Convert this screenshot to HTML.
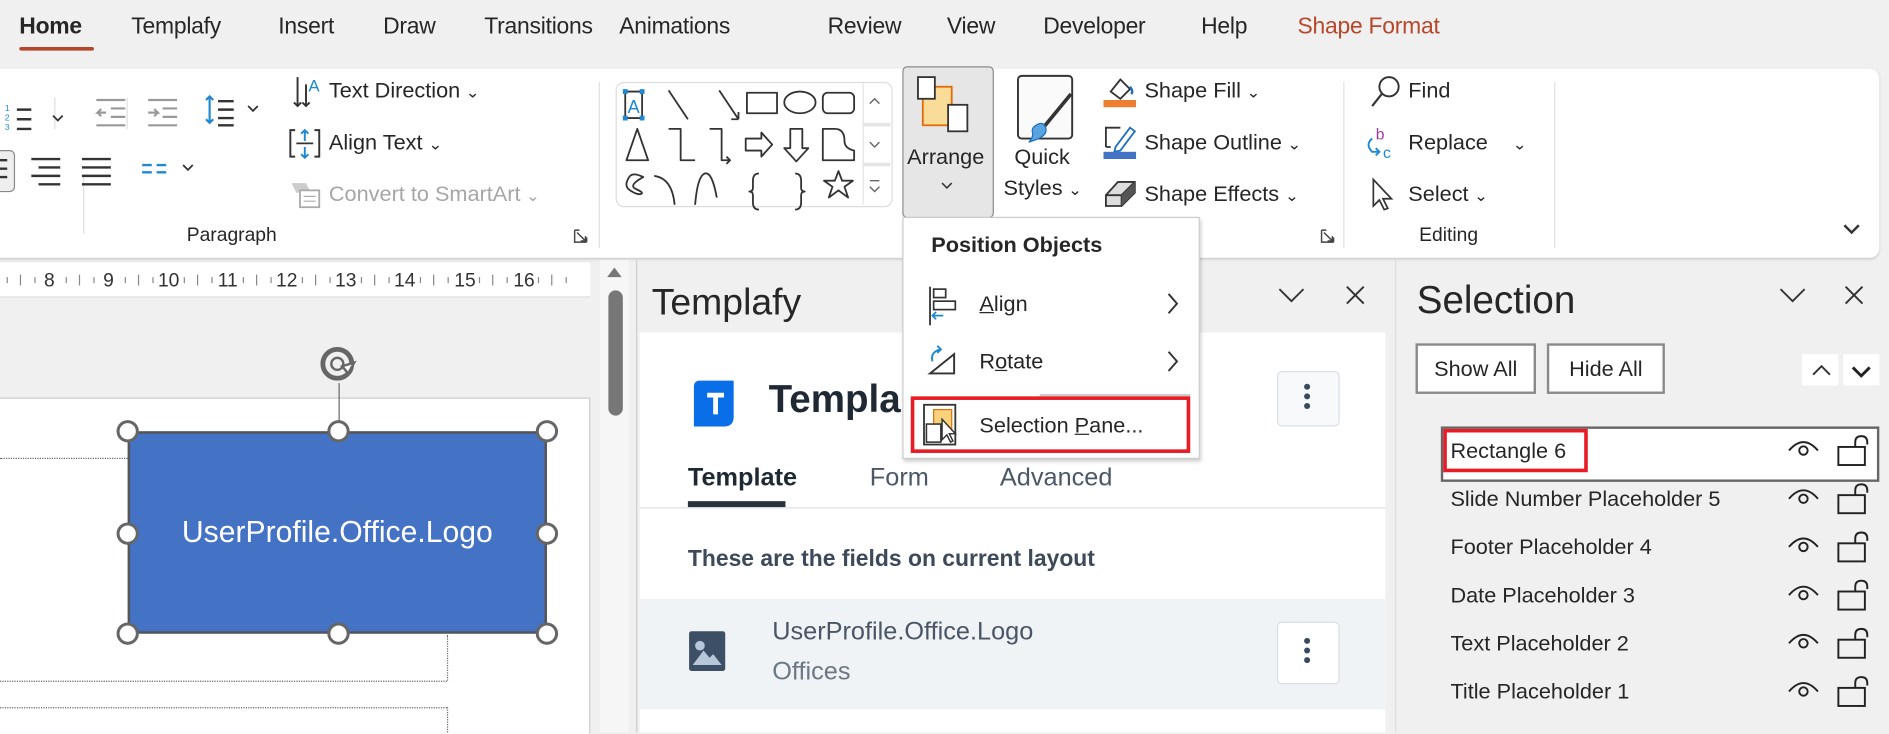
<!DOCTYPE html>
<html><head><meta charset="utf-8">
<style>
html,body{margin:0;padding:0;width:1889px;height:733px;overflow:hidden;background:#f0f0f0}
#w{position:absolute;left:0;top:0;width:1568px;height:608px;transform:scale(1.2047);transform-origin:0 0;font-family:"Liberation Sans",sans-serif;color:#262626}
.a{position:absolute;white-space:nowrap}
.t{font-size:19px;top:12px;letter-spacing:-0.2px}
.r{font-size:18px}
.c{font-size:13px;display:inline-block;transform:scaleX(1.1)}
svg{position:absolute;overflow:visible}
.sel{font-size:18px;left:1204px}
</style></head><body><div id="w">
<!-- tabs -->
<div class="a t" style="left:16px;font-weight:bold">Home</div>
<div class="a" style="left:16px;top:39px;width:62px;height:3px;background:#b7472a;border-radius:2px"></div>
<div class="a t" style="left:109px">Templafy</div>
<div class="a t" style="left:231px">Insert</div>
<div class="a t" style="left:318px">Draw</div>
<div class="a t" style="left:402px">Transitions</div>
<div class="a t" style="left:514px">Animations</div>
<div class="a t" style="left:687px">Review</div>
<div class="a t" style="left:786px">View</div>
<div class="a t" style="left:866px">Developer</div>
<div class="a t" style="left:997px">Help</div>
<div class="a t" style="left:1077px;color:#b7472a">Shape Format</div>
<!-- ribbon -->
<div class="a" style="left:-10px;top:57px;width:1570px;height:157px;background:#fff;border-radius:8px;box-shadow:0 1px 2px #ccc"></div>
<div class="a" style="left:497px;top:68px;width:1px;height:138px;background:#e0e0e0"></div>
<div class="a" style="left:1115px;top:68px;width:1px;height:138px;background:#e0e0e0"></div>
<div class="a" style="left:1290px;top:68px;width:1px;height:138px;background:#e0e0e0"></div>
<div class="a" style="left:45px;top:81px;width:1px;height:26px;background:#ddd"></div>
<div class="a" style="left:105px;top:81px;width:1px;height:26px;background:#ddd"></div>
<div class="a" style="left:69px;top:146px;width:1px;height:48px;background:#ddd"></div>
<!-- paragraph icons -->
<svg style="left:4px;top:80px" width="40" height="40"><g stroke="#333" stroke-width="2"><path d="M10 11h12M10 19h12M10 27h12"/></g><text x="0" y="12" font-size="7" fill="#1e88d2">1</text><text x="0" y="20" font-size="7" fill="#1e88d2">2</text><text x="0" y="28" font-size="7" fill="#1e88d2">3</text><path d="M40 16l4 4 4-4" stroke="#333" fill="none" stroke-width="1.5"/></svg>
<svg style="left:80px;top:80px" width="30" height="30"><g stroke="#999" stroke-width="1.8"><path d="M0 3h24M12 10h12M12 17h12M0 24h24M8 13.5H1l3-3M1 13.5l3 3" fill="none"/></g></svg>
<svg style="left:123px;top:80px" width="30" height="30"><g stroke="#999" stroke-width="1.8"><path d="M0 3h24M12 10h12M12 17h12M0 24h24M0 13.5h8l-3-3M8 13.5l-3 3" fill="none"/></g></svg>
<svg style="left:170px;top:78px" width="50" height="30"><path d="M4 2v22M1 5l3-3 3 3M1 21l3 3 3-3" stroke="#1e88d2" stroke-width="1.8" fill="none"/><path d="M11 6h13M11 13h13M11 20h13M11 26h13" stroke="#333" stroke-width="2"/><path d="M36 10l4 4 4-4" stroke="#333" fill="none" stroke-width="1.5"/></svg>
<svg style="left:-4px;top:124px" width="20" height="36"><rect x="0" y="1" width="16" height="34" rx="4" fill="#eee" stroke="#888"/><path d="M2 9h8M2 16h8M2 23h8" stroke="#333" stroke-width="2"/></svg>
<svg style="left:26px;top:130px" width="30" height="30"><path d="M0 2h24M6 9h18M0 16h24M6 23h18" stroke="#333" stroke-width="2"/></svg>
<svg style="left:68px;top:130px" width="30" height="30"><path d="M0 2h24M0 9h24M0 16h24M0 23h24" stroke="#333" stroke-width="2"/></svg>
<svg style="left:118px;top:133px" width="50" height="20"><path d="M0 4h8M12 4h8M0 10h8M12 10h8" stroke="#1e88d2" stroke-width="2"/><path d="M34 4l4 4 4-4" stroke="#333" fill="none" stroke-width="1.5"/></svg>
<svg style="left:243px;top:62px" width="26" height="30"><path d="M4 2v24M1 23l3 3 3-3M11 8v18M8 23l3 3 3-3" stroke="#333" stroke-width="1.6" fill="none"/><text x="13" y="14" font-size="14" fill="#1e88d2" font-family="Liberation Sans">A</text></svg>
<div class="a r" style="left:273px;top:65px">Text Direction <span class="c">⌄</span></div>
<svg style="left:240px;top:106px" width="30" height="30"><path d="M5 2H1v22h4M21 2h4v22h-4" stroke="#333" stroke-width="1.6" fill="none"/><path d="M6 13h14" stroke="#333" stroke-width="1.5"/><path d="M13 2v9M10 5l3-3 3 3M13 16v9M10 22l3 3 3-3" stroke="#1e88d2" stroke-width="1.6" fill="none"/></svg>
<div class="a r" style="left:273px;top:108px">Align Text <span class="c">⌄</span></div>
<svg style="left:240px;top:150px" width="30" height="26"><path d="M2 2h12l4 8H6z" fill="#ccc"/><rect x="9" y="8" width="16" height="14" fill="#fff" stroke="#aaa" stroke-width="1.5"/><path d="M12 13h10M12 17h10" stroke="#aaa"/></svg>
<div class="a r" style="left:273px;top:151px;color:#a6a6a6">Convert to SmartArt <span class="c">⌄</span></div>
<div class="a" style="left:155px;top:187px;font-size:16px">Paragraph</div>
<svg style="left:476px;top:190px" width="12" height="12"><path d="M1 1v10h10M1 1h4M11 7v4M3 3l7 7M10 6v4H6" stroke="#444" fill="none" stroke-width="1.2"/></svg>
<!-- shapes gallery -->
<div class="a" style="left:511px;top:68px;width:228px;height:102px;border:1px solid #ddd;border-radius:7px;background:#fff"></div>
<div class="a" style="left:716px;top:69px;width:1px;height:101px;background:#e4e4e4"></div>
<div class="a" style="left:716px;top:102px;width:23px;height:3px;background:#e4e4e4"></div>
<div class="a" style="left:716px;top:135px;width:23px;height:3px;background:#e4e4e4"></div>
<svg style="left:515px;top:70px" width="230" height="100" fill="none" stroke="#333" stroke-width="1.5" stroke-linejoin="round">
<rect x="4" y="6" width="14" height="22" stroke="#333"/><g fill="#1e88d2" stroke="none"><rect x="2" y="4" width="4" height="4"/><rect x="16" y="4" width="4" height="4"/><rect x="2" y="26" width="4" height="4"/><rect x="16" y="26" width="4" height="4"/></g><text x="6" y="24" font-size="15" fill="#1e88d2" stroke="none" font-family="Liberation Sans">A</text>
<path d="M40 5l16 24M82 5l16 24m0 0v-6m0 6h-6"/>
<rect x="105" y="7" width="25" height="17"/><ellipse cx="149" cy="15" rx="13" ry="9"/><rect x="168" y="7" width="26" height="17" rx="4"/>
<path d="M5 63l9-26 9 26zM40 37h10v26h12M74 37h10v26h7m-3-3l3 3-3 3M104 45h13v-5l9 10-9 10v-5h-13zM141 37h10v16h5l-10 11-10-11h5zM168 63V37h10q8 0 8 10 0 6 8 8v8z"/>
<path d="M8 76q-6 8 0 12t9 3-4-4 6-10q-8-4-11-1M28 76q15 2 17 24M62 100q2-24 8-26t10 20M115 74q-5 0-5 6v6q0 3-3 3 3 0 3 3v6q0 6 5 6M145 74q5 0 5 6v6q0 3 3 3-3 0-3 3v6q0 6-5 6M181 72l3 8h9l-7 5 3 9-8-6-8 6 3-9-7-5h9z"/>
<path d="M207 16l4-4 4 4M207 48l4 4 4-4M207 80h8M207 85l4 4 4-4" stroke-width="1.2" stroke="#666"/>
</svg>
<!-- arrange -->
<div class="a" style="left:749px;top:55px;width:74px;height:124px;background:#e6e6e6;border:1px solid #8a8a8a;border-radius:4px"></div>
<svg style="left:762px;top:64px" width="46" height="50"><rect x="4" y="8" width="24" height="32" fill="#f9dc98" stroke="#e36c0a" stroke-width="1.5"/><rect x="0" y="0" width="14" height="18" fill="#fff" stroke="#333" stroke-width="1.5"/><rect x="25" y="23" width="16" height="22" fill="#fff" stroke="#333" stroke-width="1.5"/></svg>
<div class="a r" style="left:753px;top:120px">Arrange</div>
<svg style="left:781px;top:151px" width="10" height="8"><path d="M1 1l4 4 4-4" stroke="#333" stroke-width="1.3" fill="none"/></svg>
<svg style="left:844px;top:62px" width="50" height="60"><rect x="1" y="1" width="45" height="52" rx="3" fill="#fafafa" stroke="#333" stroke-width="1.6"/><path d="M45 16L22 44" stroke="#333" stroke-width="3"/><path d="M16 42q6-4 8 2t-8 10l-6 2q4-4 3-8t3-6z" fill="#5ba3de" stroke="#1e6fbf"/></svg>
<div class="a r" style="left:842px;top:120px">Quick</div>
<div class="a r" style="left:833px;top:146px">Styles <span class="c">⌄</span></div>
<svg style="left:916px;top:62px" width="30" height="30"><path d="M6 14l8-10 8 8-8 8z" fill="#fff" stroke="#333" stroke-width="1.5"/><path d="M22 10q3 4 1 6" stroke="#1e6fbf" stroke-width="2" fill="none"/><rect x="0" y="21" width="27" height="6" fill="#ed7d31"/></svg>
<div class="a r" style="left:950px;top:65px">Shape Fill <span class="c">⌄</span></div>
<svg style="left:916px;top:104px" width="30" height="30"><path d="M2 18V2h12M2 18h4" stroke="#333" stroke-width="1.5" fill="none"/><path d="M10 18l12-16 4 3-12 16-5 1z" fill="#fff" stroke="#1e6fbf" stroke-width="1.5"/><rect x="0" y="22" width="27" height="6" fill="#4472c4"/></svg>
<div class="a r" style="left:950px;top:108px">Shape Outline <span class="c">⌄</span></div>
<svg style="left:916px;top:148px" width="30" height="26"><path d="M2 14l10-11h14v9L15 23H2z" fill="#ddd" stroke="#333" stroke-width="1.5"/><path d="M2 14h13v9M15 14L26 3" stroke="#333" stroke-width="1.5" fill="none"/><path d="M15 14v9L26 12V3z" fill="#555"/></svg>
<div class="a r" style="left:950px;top:151px">Shape Effects <span class="c">⌄</span></div>
<svg style="left:1096px;top:190px" width="12" height="12"><path d="M1 1v10h10M1 1h4M11 7v4M3 3l7 7M10 6v4H6" stroke="#444" fill="none" stroke-width="1.2"/></svg>
<!-- editing -->
<svg style="left:1137px;top:62px" width="30" height="30"><circle cx="16" cy="10" r="8" fill="none" stroke="#333" stroke-width="1.6"/><path d="M10 16L2 26" stroke="#333" stroke-width="1.8"/></svg>
<div class="a r" style="left:1169px;top:65px">Find</div>
<svg style="left:1132px;top:103px" width="30" height="34"><text x="10" y="13" font-size="13" fill="#a43ba4" font-family="Liberation Sans">b</text><text x="16" y="28" font-size="13" fill="#1e88d2" font-family="Liberation Sans">c</text><path d="M7 12q-6 5 0 11h6m-3-3l3 3-3 3" stroke="#1e88d2" stroke-width="1.6" fill="none"/></svg>
<div class="a r" style="left:1169px;top:108px">Replace</div>
<div class="a r" style="left:1256px;top:108px"><span class="c">⌄</span></div>
<svg style="left:1138px;top:147px" width="20" height="30"><path d="M2 2v22l5-5 4 8 3-1-4-8h7z" fill="#fff" stroke="#333" stroke-width="1.4"/></svg>
<div class="a r" style="left:1169px;top:151px">Select <span class="c">⌄</span></div>
<div class="a" style="left:1178px;top:187px;font-size:16px">Editing</div>
<svg style="left:1530px;top:185px" width="14" height="10"><path d="M1 2l6 6 6-6" stroke="#333" stroke-width="2" fill="none"/></svg>
<!-- ruler -->
<div class="a" style="left:0;top:218px;width:490px;height:28px;background:#fff;border-bottom:1px solid #ddd"></div>
<svg style="left:0;top:218px" width="490" height="28"><g stroke="#888"><path d="M6 12v5M17 10v9M29 12v5M55 12v5M66 10v9M78 12v5M104 12v5M115 10v9M127 12v5M153 12v5M164 10v9M176 12v5M202 12v5M213 10v9M225 12v5M251 12v5M262 10v9M274 12v5M300 12v5M311 10v9M323 12v5M349 12v5M360 10v9M372 12v5M398 12v5M409 10v9M421 12v5M447 12v5M458 10v9M470 12v5"/></g>
<g font-size="16" fill="#333" font-family="Liberation Sans" text-anchor="middle"><text x="41" y="20">8</text><text x="90" y="20">9</text><text x="140" y="20">10</text><text x="189" y="20">11</text><text x="238" y="20">12</text><text x="287" y="20">13</text><text x="336" y="20">14</text><text x="386" y="20">15</text><text x="435" y="20">16</text></g></svg>
<!-- slide -->
<div class="a" style="left:0;top:330px;width:489px;height:278px;background:#fff;border-top:1px solid #ccc;border-right:1px solid #ccc"></div>
<div class="a" style="left:0;top:380px;width:106px;border-top:1px dotted #666"></div>
<div class="a" style="left:0;top:565px;width:371px;border-top:1px dotted #666"></div>
<div class="a" style="left:371px;top:527px;height:38px;border-left:1px dotted #666"></div>
<div class="a" style="left:0;top:587px;width:371px;border-top:1px dotted #666"></div>
<div class="a" style="left:371px;top:587px;height:21px;border-left:1px dotted #666"></div>
<div class="a" style="left:106px;top:358px;width:348px;height:168px;background:#4472c4;border:2px solid #555;box-sizing:border-box;color:#fff;font-size:25px;text-align:center;line-height:164px">UserProfile.Office.Logo</div>
<div class="a" style="left:281px;top:318px;width:1px;height:40px;background:#666"></div>
<svg style="left:262px;top:284px" width="40" height="40"><circle cx="18" cy="18" r="12" fill="none" stroke="#666" stroke-width="4"/><circle cx="18" cy="18" r="5" fill="none" stroke="#666" stroke-width="2"/><path d="M22 20l10-3-5 9z" fill="#fff" stroke="#666" stroke-width="2"/></svg>
<svg style="left:96px;top:348px" width="370" height="190"><g fill="#fff" stroke="#666" stroke-width="2.5"><circle cx="10" cy="10" r="8"/><circle cx="185" cy="10" r="8"/><circle cx="358" cy="10" r="8"/><circle cx="10" cy="95" r="8"/><circle cx="358" cy="95" r="8"/><circle cx="10" cy="178" r="8"/><circle cx="185" cy="178" r="8"/><circle cx="358" cy="178" r="8"/></g></svg>
<!-- scrollbar -->
<div class="a" style="left:498px;top:216px;width:24px;height:392px;background:#f6f6f6"></div>
<svg style="left:503px;top:221px" width="14" height="10"><path d="M1 9L7 1l6 8z" fill="#777"/></svg>
<div class="a" style="left:505px;top:241px;width:12px;height:104px;background:#777;border-radius:6px"></div>
<!-- templafy pane -->
<div class="a" style="left:528px;top:216px;width:1px;height:392px;background:#ccc"></div>
<div class="a" style="left:541px;top:233px;font-size:31px">Templafy</div>
<svg style="left:1060px;top:236px" width="80" height="20"><path d="M2 4l10 10 10-10" stroke="#333" stroke-width="1.6" fill="none"/><path d="M58 2l14 14M72 2L58 16" stroke="#333" stroke-width="1.6"/></svg>
<div class="a" style="left:531px;top:276px;width:619px;height:332px;background:#fff"></div>
<svg style="left:575px;top:315px" width="40" height="40"><path d="M6 1h28v30q0 8-8 8H1V6q0-5 5-5z" fill="#0a6ee8"/><path d="M12 13h14M19 13v16" stroke="#fff" stroke-width="4"/></svg>
<div class="a" style="left:638px;top:313px;font-size:32px;font-weight:bold;color:#1f2933">Templa</div>
<div class="a" style="left:1060px;top:308px;width:50px;height:44px;border:1px solid #d8dee6;border-radius:4px;background:#f7f9fb"></div>
<svg style="left:1080px;top:318px" width="10" height="26"><g fill="#3a4a5e"><circle cx="5" cy="3" r="2.5"/><circle cx="5" cy="11" r="2.5"/><circle cx="5" cy="19" r="2.5"/></g></svg>
<div class="a" style="left:571px;top:385px;font-size:21px;font-weight:bold;color:#1f2933">Template</div>
<div class="a" style="left:571px;top:416px;width:81px;height:5px;background:#2a323c"></div>
<div class="a" style="left:722px;top:385px;font-size:21px;color:#4a5868">Form</div>
<div class="a" style="left:830px;top:385px;font-size:21px;color:#4a5868">Advanced</div>
<div class="a" style="left:531px;top:421px;width:619px;height:1px;background:#dde2e8"></div>
<div class="a" style="left:571px;top:454px;font-size:19px;font-weight:bold;color:#3d4a5a">These are the fields on current layout</div>
<div class="a" style="left:531px;top:497px;width:619px;height:92px;background:#f0f3f6"></div>
<svg style="left:571px;top:523px" width="32" height="36"><rect x="1" y="1" width="30" height="33" rx="2" fill="#3c4f66"/><circle cx="10" cy="13" r="4" fill="#b7c7da"/><path d="M4 29l9-12 5 6 3-3 7 9z" fill="#b7c7da"/></svg>
<div class="a" style="left:641px;top:513px;font-size:21px;color:#4a5565">UserProfile.Office.Logo</div>
<div class="a" style="left:641px;top:546px;font-size:21px;color:#6b7785">Offices</div>
<div class="a" style="left:1060px;top:516px;width:50px;height:50px;border:1px solid #d8dee6;border-radius:4px;background:#fff"></div>
<svg style="left:1080px;top:529px" width="10" height="26"><g fill="#3a4a5e"><circle cx="5" cy="3" r="2.5"/><circle cx="5" cy="11" r="2.5"/><circle cx="5" cy="19" r="2.5"/></g></svg>
<!-- dropdown menu -->
<div class="a" style="left:749px;top:180px;width:245px;height:199px;background:#fff;border:1px solid #ccc;box-shadow:1px 2px 3px rgba(0,0,0,.2)"></div>
<div class="a" style="left:773px;top:193px;font-size:18px;font-weight:bold">Position Objects</div>
<svg style="left:770px;top:237px" width="30" height="32"><path d="M2 1v32" stroke="#333" stroke-width="1.5"/><rect x="5" y="3" width="10" height="7" fill="#fff" stroke="#333" stroke-width="1.4"/><rect x="5" y="13" width="18" height="7" fill="#fff" stroke="#333" stroke-width="1.4"/><path d="M13 25H4m3-3l-3 3 3 3" stroke="#1e88d2" stroke-width="1.5" fill="none"/></svg>
<div class="a r" style="left:813px;top:242px"><u>A</u>lign</div>
<svg style="left:968px;top:242px" width="12" height="20"><path d="M2 2l7 8-7 8" stroke="#333" stroke-width="1.6" fill="none"/></svg>
<svg style="left:770px;top:285px" width="30" height="30"><path d="M2 25L22 9v16z" fill="#fff" stroke="#333" stroke-width="1.6"/><path d="M4 15q-2-8 7-10m-3-3l3 3-3 3" stroke="#1e88d2" stroke-width="1.6" fill="none"/></svg>
<div class="a r" style="left:813px;top:290px">R<u>o</u>tate</div>
<svg style="left:968px;top:290px" width="12" height="20"><path d="M2 2l7 8-7 8" stroke="#333" stroke-width="1.6" fill="none"/></svg>
<div class="a" style="left:863px;top:327px;width:125px;height:2px;background:#ccc"></div>
<div class="a" style="left:756px;top:329px;width:232px;height:47px;border:3px solid #e81c24;box-sizing:border-box"></div>
<svg style="left:766px;top:335px" width="30" height="38"><rect x="1" y="1" width="26" height="33" fill="#fff" stroke="#333" stroke-width="1.5"/><rect x="9" y="5" width="15" height="20" fill="#f9d27a" stroke="#e36c0a"/><rect x="3" y="17" width="12" height="15" fill="#fff" stroke="#333" stroke-width="1.3"/><path d="M16 13v17l4-4 3 6 2-1-3-6h5z" fill="#fff" stroke="#333" stroke-width="1.2"/></svg>
<div class="a r" style="left:813px;top:343px">Selection <u>P</u>ane...</div>
<!-- selection pane -->
<div class="a" style="left:1158px;top:216px;width:1px;height:392px;background:#ddd"></div>
<div class="a" style="left:1176px;top:231px;font-size:32px">Selection</div>
<svg style="left:1476px;top:236px" width="80" height="20"><path d="M2 4l10 10 10-10" stroke="#333" stroke-width="1.6" fill="none"/><path d="M56 2l14 14M70 2L56 16" stroke="#333" stroke-width="1.6"/></svg>
<div class="a" style="left:1175px;top:285px;width:100px;height:42px;border:2px solid #8a8a8a;background:#fff;box-sizing:border-box;font-size:18px;text-align:center;line-height:38px">Show All</div>
<div class="a" style="left:1284px;top:285px;width:98px;height:42px;border:2px solid #8a8a8a;background:#fff;box-sizing:border-box;font-size:18px;text-align:center;line-height:38px">Hide All</div>
<div class="a" style="left:1496px;top:294px;width:30px;height:26px;background:#fff"></div>
<div class="a" style="left:1530px;top:294px;width:30px;height:26px;background:#fff"></div>
<svg style="left:1503px;top:301px" width="60" height="14"><path d="M2 10l7-7 7 7" stroke="#333" stroke-width="1.6" fill="none"/><path d="M35 4l7 7 7-7" stroke="#222" stroke-width="2.4" fill="none"/></svg>
<div class="a" style="left:1196px;top:354px;width:364px;height:46px;border:2px solid #666;background:#fff;box-sizing:border-box"></div>
<div class="a" style="left:1198px;top:356px;width:120px;height:36px;border:3px solid #e81c24;box-sizing:border-box"></div>
<div class="a sel" style="top:364px">Rectangle 6</div>
<div class="a sel" style="top:404px">Slide Number Placeholder 5</div>
<div class="a sel" style="top:444px">Footer Placeholder 4</div>
<div class="a sel" style="top:484px">Date Placeholder 3</div>
<div class="a sel" style="top:524px">Text Placeholder 2</div>
<div class="a sel" style="top:564px">Title Placeholder 1</div>
<svg style="left:1484px;top:362px" width="70" height="240" fill="none" stroke="#222" stroke-width="1.6">
<defs><g id="e"><path d="M1 12q12-14 24 0"/><circle cx="13" cy="12" r="3.5"/><rect x="42" y="9" width="22" height="15"/><path d="M56 9V5q0-5 5-5t5 5v2"/></g></defs>
<use href="#e" y="0"/><use href="#e" y="40"/><use href="#e" y="80"/><use href="#e" y="120"/><use href="#e" y="160"/><use href="#e" y="200"/>
</svg>
</div></body></html>
